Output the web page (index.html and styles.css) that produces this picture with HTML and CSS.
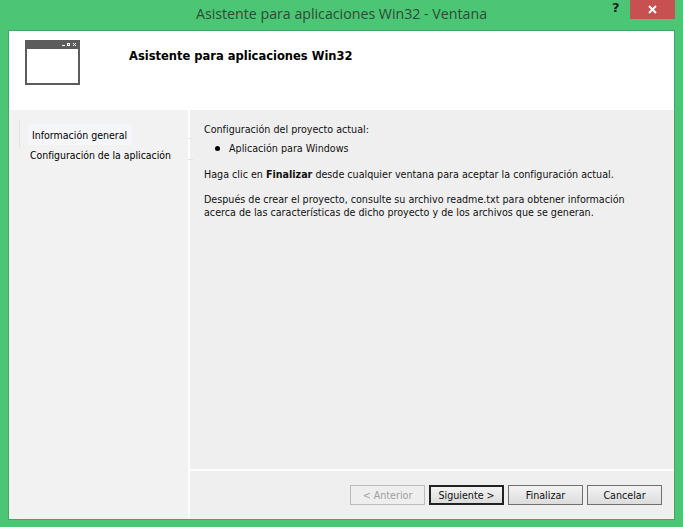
FILE: index.html
```html
<!DOCTYPE html>
<html lang="es">
<head>
<meta charset="utf-8">
<title>Asistente para aplicaciones Win32 - Ventana</title>
<link rel="stylesheet" href="styles.css">
</head>
<body>
<div class="window">
  <div class="titlebar">
    <span class="title">Asistente para aplicaciones Win32 - Ventana</span>
    <span class="help">?</span>
    <span class="close"><svg width="9" height="9" viewBox="0 0 9 9"><path d="M1 1L8 8M8 1L1 8" stroke="#fff" stroke-width="2" fill="none"/></svg></span>
  </div>
  <div class="client">
    <header class="header">
      <svg class="logo" width="55" height="45" viewBox="0 0 55 45">
        <rect x="0" y="0" width="55" height="45" fill="#5c5c5c"/>
        <rect x="2" y="9" width="51" height="34" fill="#fff"/>
        <rect x="37" y="5" width="3" height="1" fill="#fff"/>
        <rect x="42.5" y="3.5" width="2" height="2" fill="none" stroke="#fff"/>
        <path d="M48 3L51 6M51 3L48 6" stroke="#fff" fill="none"/>
      </svg>
      <h1 class="heading">Asistente para aplicaciones Win32</h1>
    </header>
    <div class="body">
      <nav class="nav">
        <div class="nav-list">
          <div class="nav-item current">Información general</div>
          <div class="nav-item">Configuración de la aplicación</div>
        </div>
      </nav>
      <main class="pane">
        <div class="content">
          <p class="line">Configuración del proyecto actual:</p>
          <div class="bullet"><span class="dot"></span>Aplicación para Windows</div>
          <p class="line">Haga clic en <b>Finalizar</b> desde cualquier ventana para aceptar la configuración actual.</p>
          <p class="line para">Después de crear el proyecto, consulte su archivo readme.txt para obtener información<br>acerca de las características de dicho proyecto y de los archivos que se generan.</p>
        </div>
        <footer class="buttons">
          <button class="btn" disabled>&lt; Anterior</button>
          <button class="btn default">Siguiente &gt;</button>
          <button class="btn">Finalizar</button>
          <button class="btn">Cancelar</button>
        </footer>
      </main>
    </div>
  </div>
</div>
</body>
</html>
```
FILE: styles.css
```css
* { box-sizing: border-box; }
html, body { margin: 0; height: 100%; }
body {
  background: #4cc674;
  font-family: "DejaVu Sans", "Liberation Sans", sans-serif;
  font-stretch: condensed;
  font-size: 10.65px;
  color: #111;
}
.window {
  width: 683px;
  height: 527px;
  display: flex;
  flex-direction: column;
  padding: 0 8px 7px 8px;
  overflow: hidden;
}
.titlebar {
  height: 30px;
  flex: none;
  display: flex;
  align-items: center;
  position: relative;
}
.title {
  flex: 1;
  text-align: center;
  font-family: "Open Sans", sans-serif;
  font-stretch: normal;
  font-size: 14.2px;
  color: #2e4a38;
  margin-top: -3px;
}
.help {
  position: absolute;
  left: 604px;
  top: 0;
  font: bold 13px/15px "DejaVu Sans", sans-serif;
  color: #222;
}
.close {
  position: absolute;
  left: 622px;
  top: 0;
  width: 45px;
  height: 19px;
  background: #c75050;
  display: flex;
  align-items: center;
  justify-content: center;
}
.client {
  flex: 1;
  display: flex;
  flex-direction: column;
  border: 1px solid #3fa862;
  background: #fff;
  min-height: 0;
}
.header {
  height: 79px;
  flex: none;
  display: flex;
  align-items: flex-start;
  padding: 9px 0 0 16px;
}
.logo { flex: none; }
.heading {
  margin: 8px 0 0 49px;
  font: bold 11.5px/16px "DejaVu Sans", sans-serif;
  color: #000;
}
.body { flex: 1; display: flex; min-height: 0; }
.nav {
  width: 179px;
  flex: none;
  background: #f2f2f2;
  margin-right: 2px;
  padding: 10px 0 0 10px;
}
.nav-list {
  height: 28px;
  padding-top: 4px;
  border-left: 1px solid #e4e4e4;
}
.nav-item {
  height: 20px;
  line-height: 20px;
  padding-left: 10px;
  font-size: 10.4px;
  color: #000;
  white-space: nowrap;
}
.nav-item.current {
  height: 21px;
  margin-left: 8px;
  width: 104px;
  background: #f5f6fa;
  padding-left: 4px;
  padding-top: 1px;
  font-size: 10.5px;
}
.pane {
  flex: 1;
  background: #efefef;
  display: flex;
  flex-direction: column;
  min-width: 0;
  position: relative;
}
.pane::before, .pane::after {
  content: "";
  position: absolute;
  left: -2px;
  width: 5px;
  height: 1px;
  background: #e2e2e2;
}
.pane::before { top: 28px; }
.pane::after { top: 49px; }
.content { flex: 1; padding: 13px 0 0 14px; color: #111; }
.line { margin: 0; line-height: 13px; white-space: nowrap; }
.bullet {
  display: flex;
  align-items: center;
  line-height: 13px;
  margin: 6px 0 13px 0;
  padding-left: 11px;
}
.dot {
  width: 5px;
  height: 5px;
  border-radius: 50%;
  background: #000;
  margin-right: 9px;
}
.para { margin-top: 12px; }
.buttons {
  height: 50px;
  flex: none;
  border-top: 2px solid #fff;
  display: flex;
  justify-content: flex-end;
  gap: 4px;
  padding: 14px 12px 0 0;
}
.btn {
  width: 75px;
  height: 20px;
  padding: 0;
  font: inherit;
  font-stretch: condensed;
  color: #111;
  border: 1px solid #707070;
  background: linear-gradient(#f3f3f3, #dcdcdc);
}
.btn:disabled { color: #a0a0a0; border-color: #bcbcbc; background: #eeeeee; }
.btn.default { border: 2px solid #222; }
```
